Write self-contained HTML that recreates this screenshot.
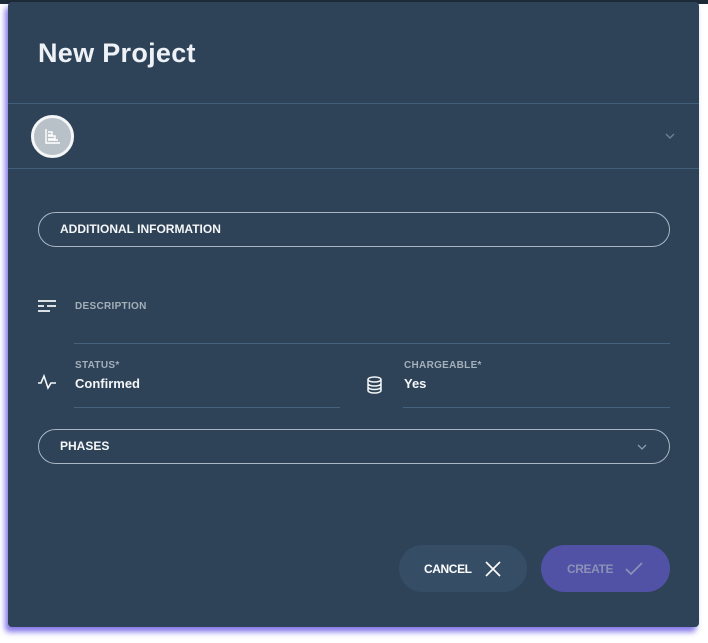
<!DOCTYPE html>
<html><head><meta charset="utf-8"><style>
*{box-sizing:border-box;margin:0;padding:0}
body{width:708px;height:643px;background:#fff;position:relative;overflow:hidden;font-family:"Liberation Sans",sans-serif}
.top{position:absolute;left:0;top:0;width:708px;height:4px;background:#1d2a37}
.modal{position:absolute;left:8px;top:2px;width:691px;height:625px;background:#2e4358;border-radius:4px;box-shadow:-3px 5px 6px rgba(70,50,220,.65)}
h1{position:absolute;left:30px;top:36px;font-size:27px;font-weight:bold;color:#eef2f6;letter-spacing:0.3px}
.line{position:absolute;left:0;width:691px;height:1px;background:#3f5f7c}
.circ{position:absolute;left:23px;top:113px;width:43px;height:43px;border-radius:50%;background:#b8c0c8;border:3px solid #f4f6f8}
.pill{position:absolute;left:30px;width:632px;height:35px;border:1px solid #a9b6c3;border-radius:18px;color:#f4f6f8;font-weight:bold;font-size:12px;padding-left:21px;line-height:33px;letter-spacing:0}
.lbl{position:absolute;font-size:10px;font-weight:bold;color:#a4afba;letter-spacing:0.3px}
.val{position:absolute;font-size:13px;font-weight:bold;color:#f4f6f8}
.ul{position:absolute;height:1px;background:#46627d}
.btn{position:absolute;top:543px;height:47px;border-radius:24px;font-size:12px;font-weight:bold;letter-spacing:-0.4px}
</style></head><body>
<div class="top"></div>
<div class="modal">
<h1>New Project</h1>
<div class="line" style="top:101px"></div>
<div class="line" style="top:166px"></div>
<div class="circ"><svg width="37" height="37" viewBox="0 0 37 37" style="position:absolute;left:0;top:0"><path d="M12 11v14h14M14 14h4v3h-4M14 18h7v3h-7M14 22h10" fill="none" stroke="#fff" stroke-width="1.4"/></svg></div>
<svg style="position:absolute;left:657px;top:131px" width="10" height="6"><path d="M1 1l4 4 4-4" fill="none" stroke="#6d8196" stroke-width="1.4"/></svg>
<div class="pill" style="top:210px">ADDITIONAL INFORMATION</div>
<svg style="position:absolute;left:30px;top:298px" width="18" height="14"><path d="M0 1h18M0 6h6M9 6h9M0 11h12" stroke="#f4f6f8" stroke-width="1.8"/></svg>
<div class="lbl" style="left:67px;top:299px">DESCRIPTION</div>
<div class="ul" style="left:66px;top:341px;width:596px"></div>
<div class="lbl" style="left:67px;top:358px">STATUS*</div>
<div class="val" style="left:67px;top:374px">Confirmed</div>
<svg style="position:absolute;left:30px;top:372px" width="18" height="16"><path d="M0 9h3l3-7 4 12 3-5h5" fill="none" stroke="#f4f6f8" stroke-width="1.6"/></svg>
<div class="ul" style="left:66px;top:405px;width:266px"></div>
<svg style="position:absolute;left:358px;top:374px" width="17" height="18"><g fill="none" stroke="#f4f6f8" stroke-width="1.5"><ellipse cx="8.5" cy="3.5" rx="6.5" ry="2.5"/><path d="M2 3.5v11c0 1.4 2.9 2.5 6.5 2.5s6.5-1.1 6.5-2.5v-11M2 7.5c0 1.4 2.9 2.5 6.5 2.5s6.5-1.1 6.5-2.5M2 11c0 1.4 2.9 2.5 6.5 2.5s6.5-1.1 6.5-2.5"/></g></svg>
<div class="lbl" style="left:396px;top:358px">CHARGEABLE*</div>
<div class="val" style="left:396px;top:374px">Yes</div>
<div class="ul" style="left:395px;top:405px;width:267px"></div>
<div class="pill" style="top:427px">PHASES</div>
<svg style="position:absolute;left:629px;top:442px" width="10" height="6"><path d="M1 1l4 4 4-4" fill="none" stroke="#8a9bab" stroke-width="1.3"/></svg>
<div class="btn" style="left:391px;width:128px;background:#354e66;color:#fff"><span style="position:absolute;left:25px;top:17px">CANCEL</span><svg style="position:absolute;left:86px;top:16px" width="16" height="16"><path d="M1 1l14 14M15 1L1 15" stroke="#fff" stroke-width="1.6"/></svg></div>
<div class="btn" style="left:533px;width:129px;background:#5152a5;color:#8c90b8"><span style="position:absolute;left:26px;top:17px">CREATE</span><svg style="position:absolute;left:84px;top:17px" width="18" height="14"><path d="M1 7l5 5L17 1" fill="none" stroke="#8c90b8" stroke-width="1.8"/></svg></div>
</div>
</body></html>
